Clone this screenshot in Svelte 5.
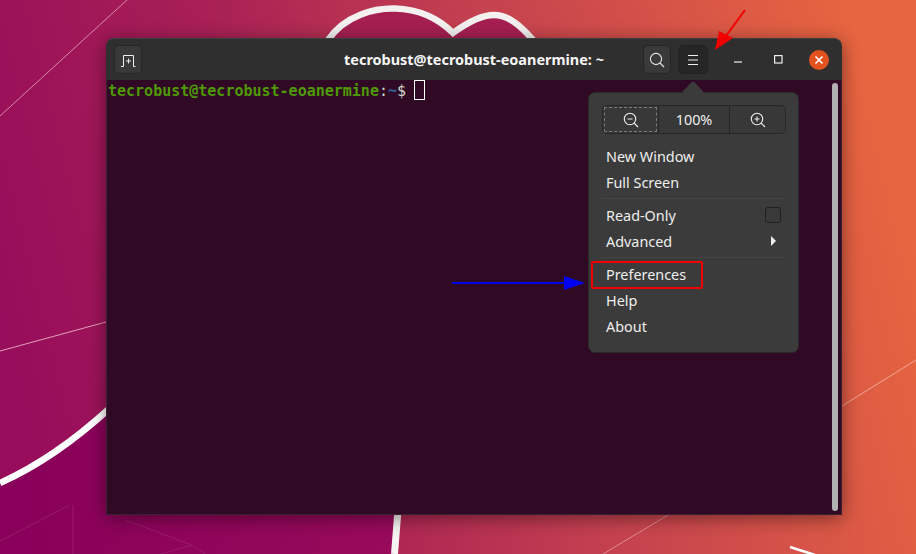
<script>
    // Menu sections, split by separators
    const sections = [
        [{ label: 'New Window' }, { label: 'Full Screen' }],
        [{ label: 'Read-Only', check: true }, { label: 'Advanced', sub: true }],
        [{ label: 'Preferences' }, { label: 'Help' }, { label: 'About' }]
    ];
</script>

<main class="desktop">
    <svg class="wallpaper" width="916" height="554" viewBox="0 0 916 554">
        <defs>
            <linearGradient id="bg" x1="0" y1="0.55" x2="1" y2="0.4">
                <stop offset="0" stop-color="#980d5b" />
                <stop offset="0.3" stop-color="#a82055" />
                <stop offset="0.6" stop-color="#c5424f" />
                <stop offset="1" stop-color="#e8663f" />
            </linearGradient>
            <linearGradient id="low" x1="0" y1="0" x2="1" y2="0">
                <stop offset="0" stop-color="#88005a" />
                <stop offset="1" stop-color="#980a5a" />
            </linearGradient>
        </defs>
        <rect width="916" height="554" fill="url(#bg)" />
        <path d="M0 483 C40 465 75 440 110 408 L398 500 L394 554 L0 554 Z" fill="url(#low)" />
        <path d="M328 40 C345 15 375 8 395 8.5 C420 9 440 20 453 33 C468 22 482 15 494 15 C508 15 520 25 533 40 Z" fill="#a51f50" />
        <path d="M328 40 C345 15 375 8 395 8.5 C420 9 440 20 453 33 C468 22 482 15 494 15 C508 15 520 25 533 40" fill="none" stroke="#f4f0f0" stroke-width="6.5" />
        <path d="M0 483 C40 465 75 440 110 408" fill="none" stroke="#fff" stroke-width="6.5" />
        <path d="M398 510 L394.5 554" fill="none" stroke="#f6f2f2" stroke-width="7" />
        <path d="M790 547 L815 555" fill="none" stroke="#fff" stroke-width="2.5" />
        <path d="M127 0 L0 116" stroke="#d98aa8" stroke-width="1" />
        <path d="M0 351 L106 322" stroke="#e0a0b8" stroke-width="1" />
        <path d="M842 406 L916 360" stroke="#f0a898" stroke-width="1" />
        <path d="M603 554 L668 515" stroke="#e08a90" stroke-width="1" />
        <path d="M0 541 L70 505 M73 505 L73 554 M125 520 L192 545 M160 554 L192 545 L205 554" stroke="#9a1a6c" stroke-width="1" fill="none" />
    </svg>

    <section class="window">
        <header class="titlebar">
            <button class="btn tab">
                <svg width="16" height="16" viewBox="0 0 16 16" fill="none" stroke="#eee" stroke-width="1">
                    <path d="M1 14.5H3.5V3.5H13.5V14.5H15.5" />
                    <path d="M8.5 6.5v5M6 9h5" />
                </svg>
            </button>
            <h1>tecrobust@tecrobust-eoanermine: ~</h1>
            <button class="btn search">
                <svg width="16" height="16" viewBox="0 0 16 16" fill="none" stroke="#e6e6e6" stroke-width="1.1">
                    <circle cx="7" cy="7" r="5.6" />
                    <path d="M11 11l4 4" />
                </svg>
            </button>
            <button class="btn menu">
                <svg width="12" height="10" viewBox="0 0 12 10" stroke="#eee" stroke-width="1">
                    <path d="M1 0.5h10M1 5h10M1 9.5h10" />
                </svg>
            </button>
            <div class="controls">
                <svg class="min" width="8" height="2" viewBox="0 0 8 2"><path d="M0 1h8" stroke="#eee" stroke-width="1.2" /></svg>
                <svg class="max" width="9" height="9" viewBox="0 0 9 9"><rect x="0.6" y="0.6" width="7.4" height="7.4" fill="none" stroke="#eee" stroke-width="1.2" /></svg>
                <span class="close">
                    <svg width="10" height="10" viewBox="0 0 10 10"><path d="M1.5 1.5l7 7M8.5 1.5l-7 7" stroke="#fff" stroke-width="1.6" /></svg>
                </span>
            </div>
        </header>

        <div class="terminal">
            <div class="prompt"><span class="user">tecrobust@tecrobust-eoanermine</span><span class="plain">:</span><span class="path">~</span><span class="plain">$</span><span class="cursor"></span></div>
            <div class="scrollbar"></div>
        </div>

        <div class="popover">
            <div class="zoom">
                <button class="zbtn focus">
                    <svg width="16" height="16" viewBox="0 0 16 16" fill="none" stroke="#eee" stroke-width="1.1">
                        <circle cx="7" cy="7" r="5.7" /><path d="M11 11l4 4M4.5 7h5" />
                    </svg>
                </button>
                <div class="pct">100%</div>
                <button class="zbtn">
                    <svg width="16" height="16" viewBox="0 0 16 16" fill="none" stroke="#eee" stroke-width="1.1">
                        <circle cx="7" cy="7" r="5.7" /><path d="M11 11l4 4M4.5 7h5M7 4.5v5" />
                    </svg>
                </button>
            </div>
            {#each sections as items, i}
                {#if i > 0}<div class="sep"></div>{/if}
                {#each items as item}
                    <div class="row">
                        <span>{item.label}</span>
                        {#if item.check}<span class="check"></span>{/if}
                        {#if item.sub}<span class="sub"></span>{/if}
                    </div>
                {/each}
            {/each}
        </div>
    </section>

    <!-- annotations drawn over the screenshot -->
    <svg class="notes" width="916" height="554" viewBox="0 0 916 554">
        <path d="M745 10 L726 36" stroke="#f00000" stroke-width="2" />
        <path d="M715 50 L719 31 L733 38 Z" fill="#f00000" />
        <path d="M452 283 H566" stroke="#0000f0" stroke-width="2" />
        <path d="M585 283 L564 276 V290 Z" fill="#0000f0" />
        <rect x="592" y="262" width="110" height="26" fill="none" stroke="#f00000" stroke-width="2" rx="1" />
    </svg>
</main>

<style>
    :global(body) {
        margin: 0;
        background: #a01c55;
    }

    .desktop {
        position: relative;
        width: 916px;
        height: 554px;
        overflow: hidden;
    }

    .wallpaper, .notes {
        position: absolute;
        left: 0;
        top: 0;
    }

    .window {
        position: absolute;
        left: 106px;
        top: 38px;
        width: 736px;
        height: 477px;
        display: flex;
        flex-direction: column;
        border-radius: 8px 8px 0 0;
        box-shadow: 0 3px 18px rgba(0, 0, 0, 0.45);
        font-family: "Noto Sans", sans-serif;
    }

    .titlebar {
        height: 42px;
        box-sizing: border-box;
        display: flex;
        align-items: center;
        padding: 0 13px 0 8px;
        background: #2f2f2f;
        border-top: 1px solid #3e3e3e;
        border-radius: 8px 8px 0 0;
        position: relative;
    }

    h1 {
        position: absolute;
        left: 0;
        right: 0;
        margin: 0;
        text-align: center;
        font-size: 14.45px;
        font-weight: 700;
        color: #f5f5f5;
        pointer-events: none;
    }

    .btn {
        display: flex;
        align-items: center;
        justify-content: center;
        height: 29px;
        padding: 0;
        border: 1px solid #262626;
        border-radius: 5px;
        background: #393939;
        box-sizing: border-box;
    }

    .tab { width: 28px; }
    .search { width: 28px; margin-left: auto; }
    .menu { width: 30px; margin-left: 7px; background: #262626; border-color: #222; }

    .controls {
        display: flex;
        align-items: center;
        margin-left: 26px;
    }

    .min { margin-top: 5px; }
    .max { margin-left: 32px; }

    .close {
        display: flex;
        align-items: center;
        justify-content: center;
        width: 20px;
        height: 20px;
        margin-left: 26px;
        border-radius: 50%;
        background: #e2521f;
    }

    .terminal {
        flex: 1;
        position: relative;
        background: #300a24;
        border: solid #3a2233;
        border-width: 0 1px 1px 1px;
    }

    .prompt {
        font-family: "DejaVu Sans Mono", monospace;
        font-size: 15px;
        line-height: 20px;
        white-space: pre;
        font-weight: 700;
        display: flex;
        align-items: flex-start;
        padding-left: 1px;
    }

    .prompt span:not(.cursor) {
        margin-top: 1px;
    }

    .user { color: #4e9a06; }
    .plain { color: #d3d7cf; font-weight: 400; }
    .path { color: #3465a4; }

    .cursor {
        width: 11px;
        height: 20px;
        margin-left: 8px;
        border: 1px solid #fff;
        box-sizing: border-box;
    }

    .scrollbar {
        position: absolute;
        right: 3px;
        top: 3px;
        bottom: 3px;
        width: 6px;
        background: #b0b0b0;
        border-radius: 3px;
    }

    .popover {
        position: absolute;
        left: 482px;
        top: 54px;
        width: 211px;
        box-sizing: border-box;
        padding: 12px 12px 13px 13px;
        background: #3b3b3b;
        border: 1px solid #2a2a2a;
        border-radius: 7px;
        color: #eee;
        font-size: 14.4px;
    }

    .popover::before {
        content: "";
        position: absolute;
        left: 94px;
        top: -11px;
        width: 20px;
        height: 20px;
        background: #3b3b3b;
        transform: rotate(45deg) scale(0.78);
        border-radius: 2px;
    }

    .zoom {
        position: relative;
        height: 29px;
        display: grid;
        grid-template-columns: 55px 72px 1fr;
        margin-bottom: 9px;
        border: 1px solid #272727;
        border-radius: 5px;
        box-sizing: border-box;
        background: #383838;
    }

    .zbtn {
        display: flex;
        align-items: center;
        justify-content: center;
        padding: 0;
        border: none;
        background: none;
    }

    .zbtn.focus {
        outline: 1px dashed #777;
        outline-offset: -2px;
    }

    .pct {
        display: flex;
        align-items: center;
        justify-content: center;
        border: solid #272727;
        border-width: 0 1px;
    }

    .row {
        height: 26px;
        display: flex;
        align-items: center;
        justify-content: space-between;
        padding: 0 5px 0 4px;
    }

    .sep {
        height: 1px;
        margin: 3px 0;
        background: #454545;
    }

    .check {
        width: 16px;
        height: 16px;
        box-sizing: border-box;
        border: 1px solid #1f1f1f;
        border-radius: 3px;
        background: #3a3a3a;
    }

    .sub {
        width: 0;
        height: 0;
        margin-right: 5px;
        border-left: 5px solid #eee;
        border-top: 5px solid transparent;
        border-bottom: 5px solid transparent;
    }
</style>
